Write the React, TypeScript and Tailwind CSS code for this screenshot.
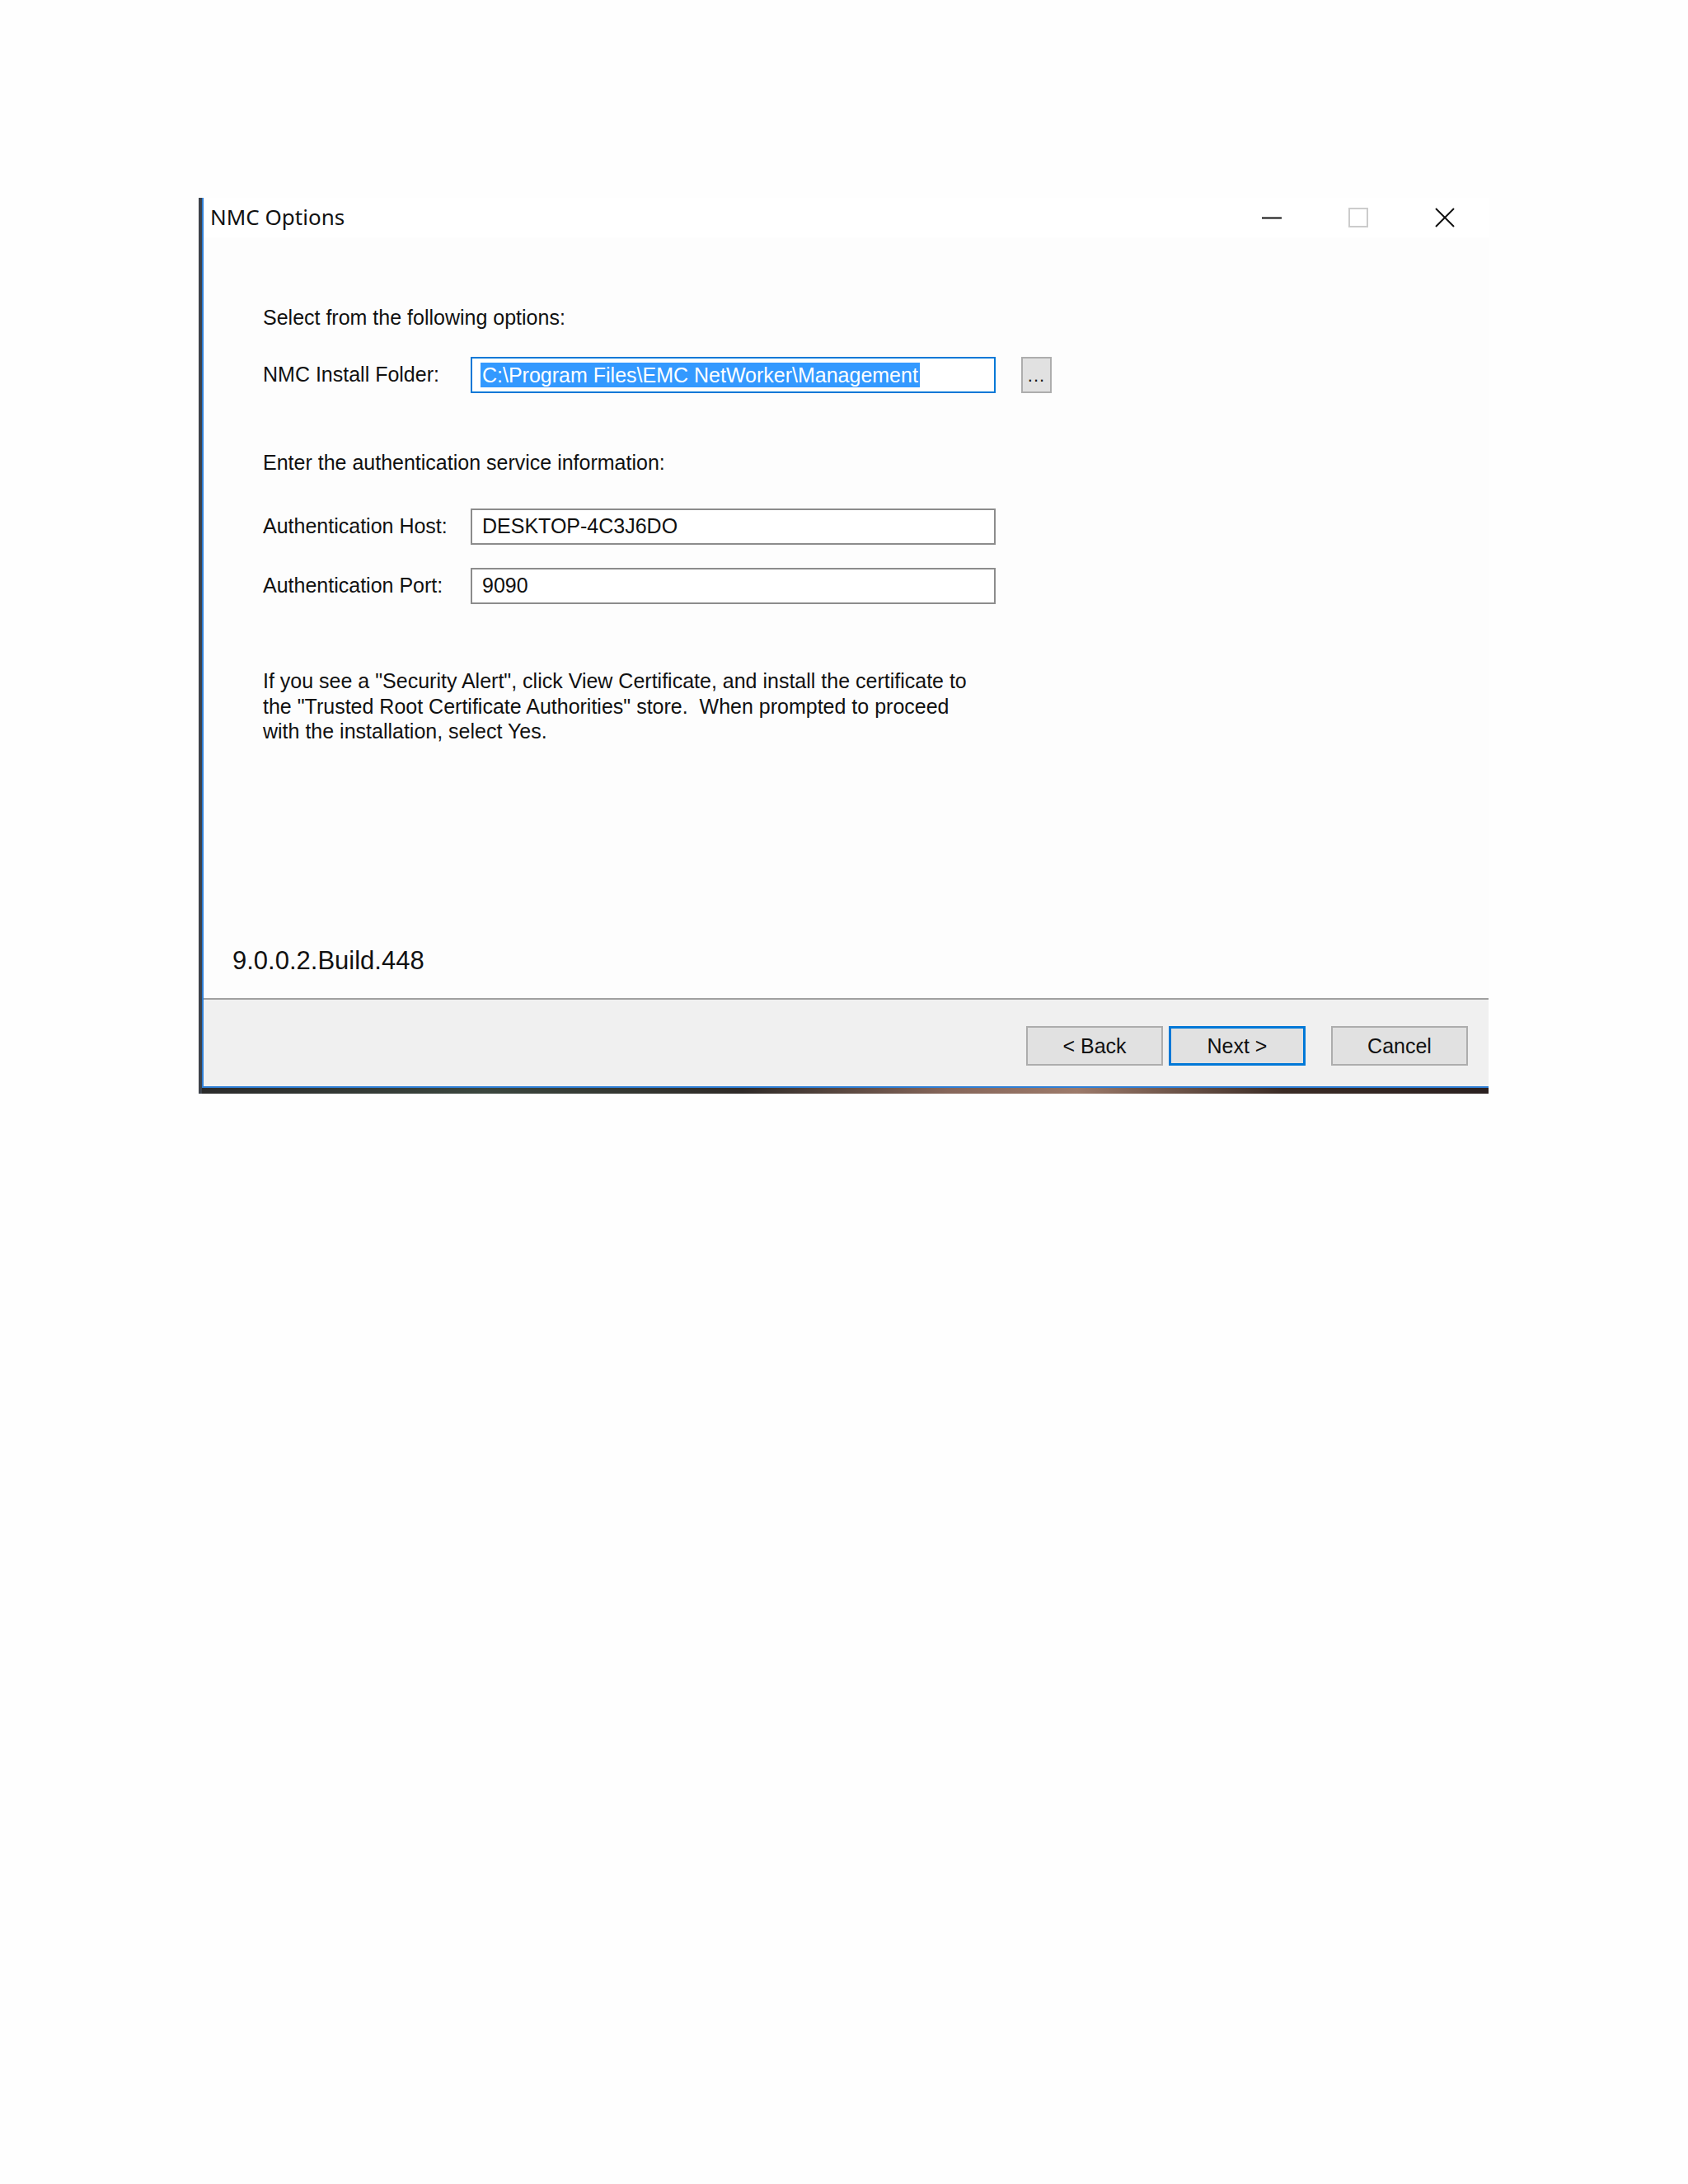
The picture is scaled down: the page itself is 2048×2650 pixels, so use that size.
import React from "react";

const body = { fontFamily: '"Liberation Sans", Arial, sans-serif' };
const title = { fontFamily: '"Noto Sans", "Open Sans", sans-serif' };

function Field({ label, value, focused }: { label: string; value: string; focused?: boolean }) {
  return (
    <div className="flex items-center h-[44px]">
      <div className="w-[252px] text-[25px] text-[#111]">{label}</div>
      <div
        className={
          "w-[637px] h-[44px] flex items-center pl-[10px] text-[25px] bg-white " +
          (focused ? "border-2 border-[#0078d7]" : "border-2 border-[#8c8c8c]")
        }
      >
        {focused ? (
          <span className="bg-[#3399ff] text-white leading-[30px] px-[2px]">{value}</span>
        ) : (
          <span className="text-[#111] px-[2px]">{value}</span>
        )}
      </div>
    </div>
  );
}

function WizardButton({ children, primary }: { children: React.ReactNode; primary?: boolean }) {
  return (
    <button
      className={
        "h-[48px] w-[166px] bg-[#e1e1e1] text-[25px] text-[#111] flex items-center justify-center pt-[2px] " +
        (primary ? "border-[3px] border-[#0078d7]" : "border-2 border-[#adadad]")
      }
    >
      {children}
    </button>
  );
}

export default function App() {
  return (
    <div className="w-[2048px] min-h-[2650px] bg-[#fefefe] pt-[240px] pl-[241px]" style={body}>
      {/* window frame: dark shadow edge on the left and below, accent line inside */}
      <div className="w-[1565px] border-l-[4px] border-[#3d424a]">
        <div className="border-l-2 border-b-2 border-[#2f7fd6] bg-white flex flex-col">
          {/* title bar */}
          <div className="h-[48px] flex items-center pl-[8px] pr-[41px]">
            <span className="text-[26px] text-[#111] -mt-[2px]" style={title}>
              NMC Options
            </span>
            <div className="ml-auto flex items-center gap-[81px]">
              <svg width="24" height="24" viewBox="0 0 24 24">
                <path d="M0 12.5H24" stroke="#111" strokeWidth="2" />
              </svg>
              <svg width="24" height="24" viewBox="0 0 24 24">
                <rect x="1" y="1" width="22" height="22" fill="none" stroke="#cccccc" strokeWidth="2" />
              </svg>
              <svg width="24" height="24" viewBox="0 0 24 24">
                <path d="M1 1L23 23M23 1L1 23" stroke="#111" strokeWidth="2" />
              </svg>
            </div>
          </div>

          {/* page body */}
          <div className="h-[923px] bg-[#fdfdfd] flex flex-col pl-[72px] text-[#111]">
            <div className="mt-[82px] text-[25px] leading-[30px]">Select from the following options:</div>

            <div className="mt-[33px] flex items-center">
              <Field label="NMC Install Folder:" value="C:\Program Files\EMC NetWorker\Management" focused />
              <div className="ml-[31px] w-[37px] h-[44px] border-2 border-[#adadad] bg-[#e1e1e1] flex items-end justify-center pb-[8px] text-[22px] leading-none tracking-[1px]">
                ...
              </div>
            </div>

            <div className="mt-[69px] text-[25px] leading-[30px]">Enter the authentication service information:</div>

            <div className="mt-[41px]">
              <Field label="Authentication Host:" value="DESKTOP-4C3J6DO" />
            </div>
            <div className="mt-[28px]">
              <Field label="Authentication Port:" value="9090" />
            </div>

            <div className="mt-[78px] text-[25px] leading-[30.5px] whitespace-nowrap">
              <div>If you see a "Security Alert", click View Certificate, and install the certificate to</div>
              <div>the "Trusted Root Certificate Authorities" store.&nbsp; When prompted to proceed</div>
              <div>with the installation, select Yes.</div>
            </div>

            <div className="mt-auto mb-[28px] -ml-[37px] text-[31px] leading-[34px]">9.0.0.2.Build.448</div>
          </div>

          {/* button strip */}
          <div className="border-t-2 border-[#a0a0a0] bg-[#f0f0f0] h-[107px] flex items-start justify-end pt-[32px] pr-[25px]">
            <WizardButton>&lt; Back</WizardButton>
            <div className="ml-[7px]">
              <WizardButton primary>Next &gt;</WizardButton>
            </div>
            <div className="ml-[31px]">
              <WizardButton>Cancel</WizardButton>
            </div>
          </div>
        </div>
        {/* desktop showing through under the window edge */}
        <div className="h-[7px] bg-[linear-gradient(90deg,#2b2b2b_0%,#3a463e_22%,#2e2a27_42%,#86665a_58%,#9c7a6a_68%,#3a2b25_84%,#2a2020_100%)]" />
      </div>
    </div>
  );
}
